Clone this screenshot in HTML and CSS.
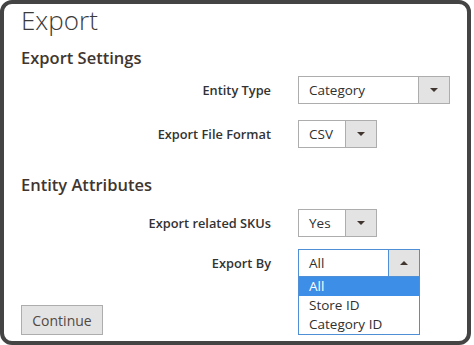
FILE: index.html
```html
<!DOCTYPE html>
<html lang="en">
<head>
  <meta charset="UTF-8" />
  <meta name="viewport" content="width=device-width, initial-scale=1.0">
  <title>Export</title>
  <link rel="stylesheet" href="styles.css">
</head>
<body>
  <div class="frame">
    <h1 class="page-title">Export</h1>

    <h2 class="legend">Export Settings</h2>

    <div class="field first">
      <label class="label">Entity Type</label>
      <div class="select wide">
        <span class="value">Category</span>
        <span class="arrow"><i class="tri down"></i></span>
      </div>
    </div>

    <div class="field">
      <label class="label">Export File Format</label>
      <div class="select small">
        <span class="value">CSV</span>
        <span class="arrow"><i class="tri down"></i></span>
      </div>
    </div>

    <h2 class="legend second">Entity Attributes</h2>

    <div class="field first-attr">
      <label class="label">Export related SKUs</label>
      <div class="select small">
        <span class="value">Yes</span>
        <span class="arrow"><i class="tri down"></i></span>
      </div>
    </div>

    <div class="field tight">
      <label class="label">Export By</label>
      <div class="select medium open">
        <span class="value">All</span>
        <span class="arrow"><i class="tri up"></i></span>
        <ul class="options">
          <li class="selected">All</li>
          <li>Store ID</li>
          <li>Category ID</li>
        </ul>
      </div>
    </div>

    <button class="btn">Continue</button>
  </div>
</body>
</html>
```

FILE: styles.css
```css
body {
  margin: 0;
  padding: 0;
  background: white;
  font-family: "Open Sans", "DejaVu Sans", sans-serif;
  color: #303030;
}

.frame {
  box-sizing: border-box;
  width: 471px;
  height: 345px;
  border: 4px solid #444;
  border-radius: 12px;
  padding-left: 17px;
  background: white;
}

.page-title {
  margin: 0;
  font-size: 26px;
  font-weight: 300;
  line-height: 32px;
  color: #3a3a3a;
}

.legend {
  margin: 10px 0 0;
  font-size: 16.5px;
  font-weight: 600;
  line-height: 24px;
  color: #41362f;
}

.legend.second {
  margin-top: 25px;
}

.field {
  display: flex;
  align-items: center;
  gap: 27px;
  margin-top: 16px;
}

.field.first {
  margin-top: 6px;
}

.field.first-attr {
  margin-top: 12px;
}

.field.tight {
  margin-top: 12px;
}

.label {
  width: 250px;
  text-align: right;
  font-size: 12.8px;
  font-weight: 600;
  line-height: 28px;
  color: #333;
}

.select {
  position: relative;
  box-sizing: border-box;
  height: 28px;
  display: flex;
  border: 1px solid #adadad;
  background: white;
  font-size: 13.5px;
  color: #303030;
}

.select.wide { width: 152px; }
.select.small { width: 79px; }
.select.medium { width: 122px; }

.select.open {
  border-color: #4f8fd6;
}

.value {
  flex: 1;
  padding-left: 10px;
  line-height: 26px;
}

.arrow {
  width: 30px;
  border-left: 1px solid #adadad;
  background: #e3e3e3;
  display: flex;
  align-items: center;
  justify-content: center;
}

.open .arrow {
  border-left-color: #4f8fd6;
}

.tri {
  width: 0;
  height: 0;
  border-left: 4px solid transparent;
  border-right: 4px solid transparent;
}

.tri.down { border-top: 4px solid #41362f; }
.tri.up { border-bottom: 4px solid #41362f; }

.options {
  position: absolute;
  top: 26px;
  left: -1px;
  width: 122px;
  box-sizing: border-box;
  margin: 0;
  padding: 0;
  list-style: none;
  background: white;
  border: 1px solid #4f8fd6;
}

.options li {
  height: 19px;
  line-height: 19px;
  padding-left: 10px;
  font-size: 13.5px;
  color: #303030;
}

.options li.selected {
  background: #3c8ee6;
  color: white;
}

.btn {
  display: block;
  margin-top: 28px;
  width: 82px;
  height: 30px;
  box-sizing: border-box;
  border: 1px solid #adadad;
  background: #e3e3e3;
  font-family: "Open Sans", "DejaVu Sans", sans-serif;
  font-size: 14px;
  font-weight: 400;
  color: #514943;
  padding: 0;
}
```
